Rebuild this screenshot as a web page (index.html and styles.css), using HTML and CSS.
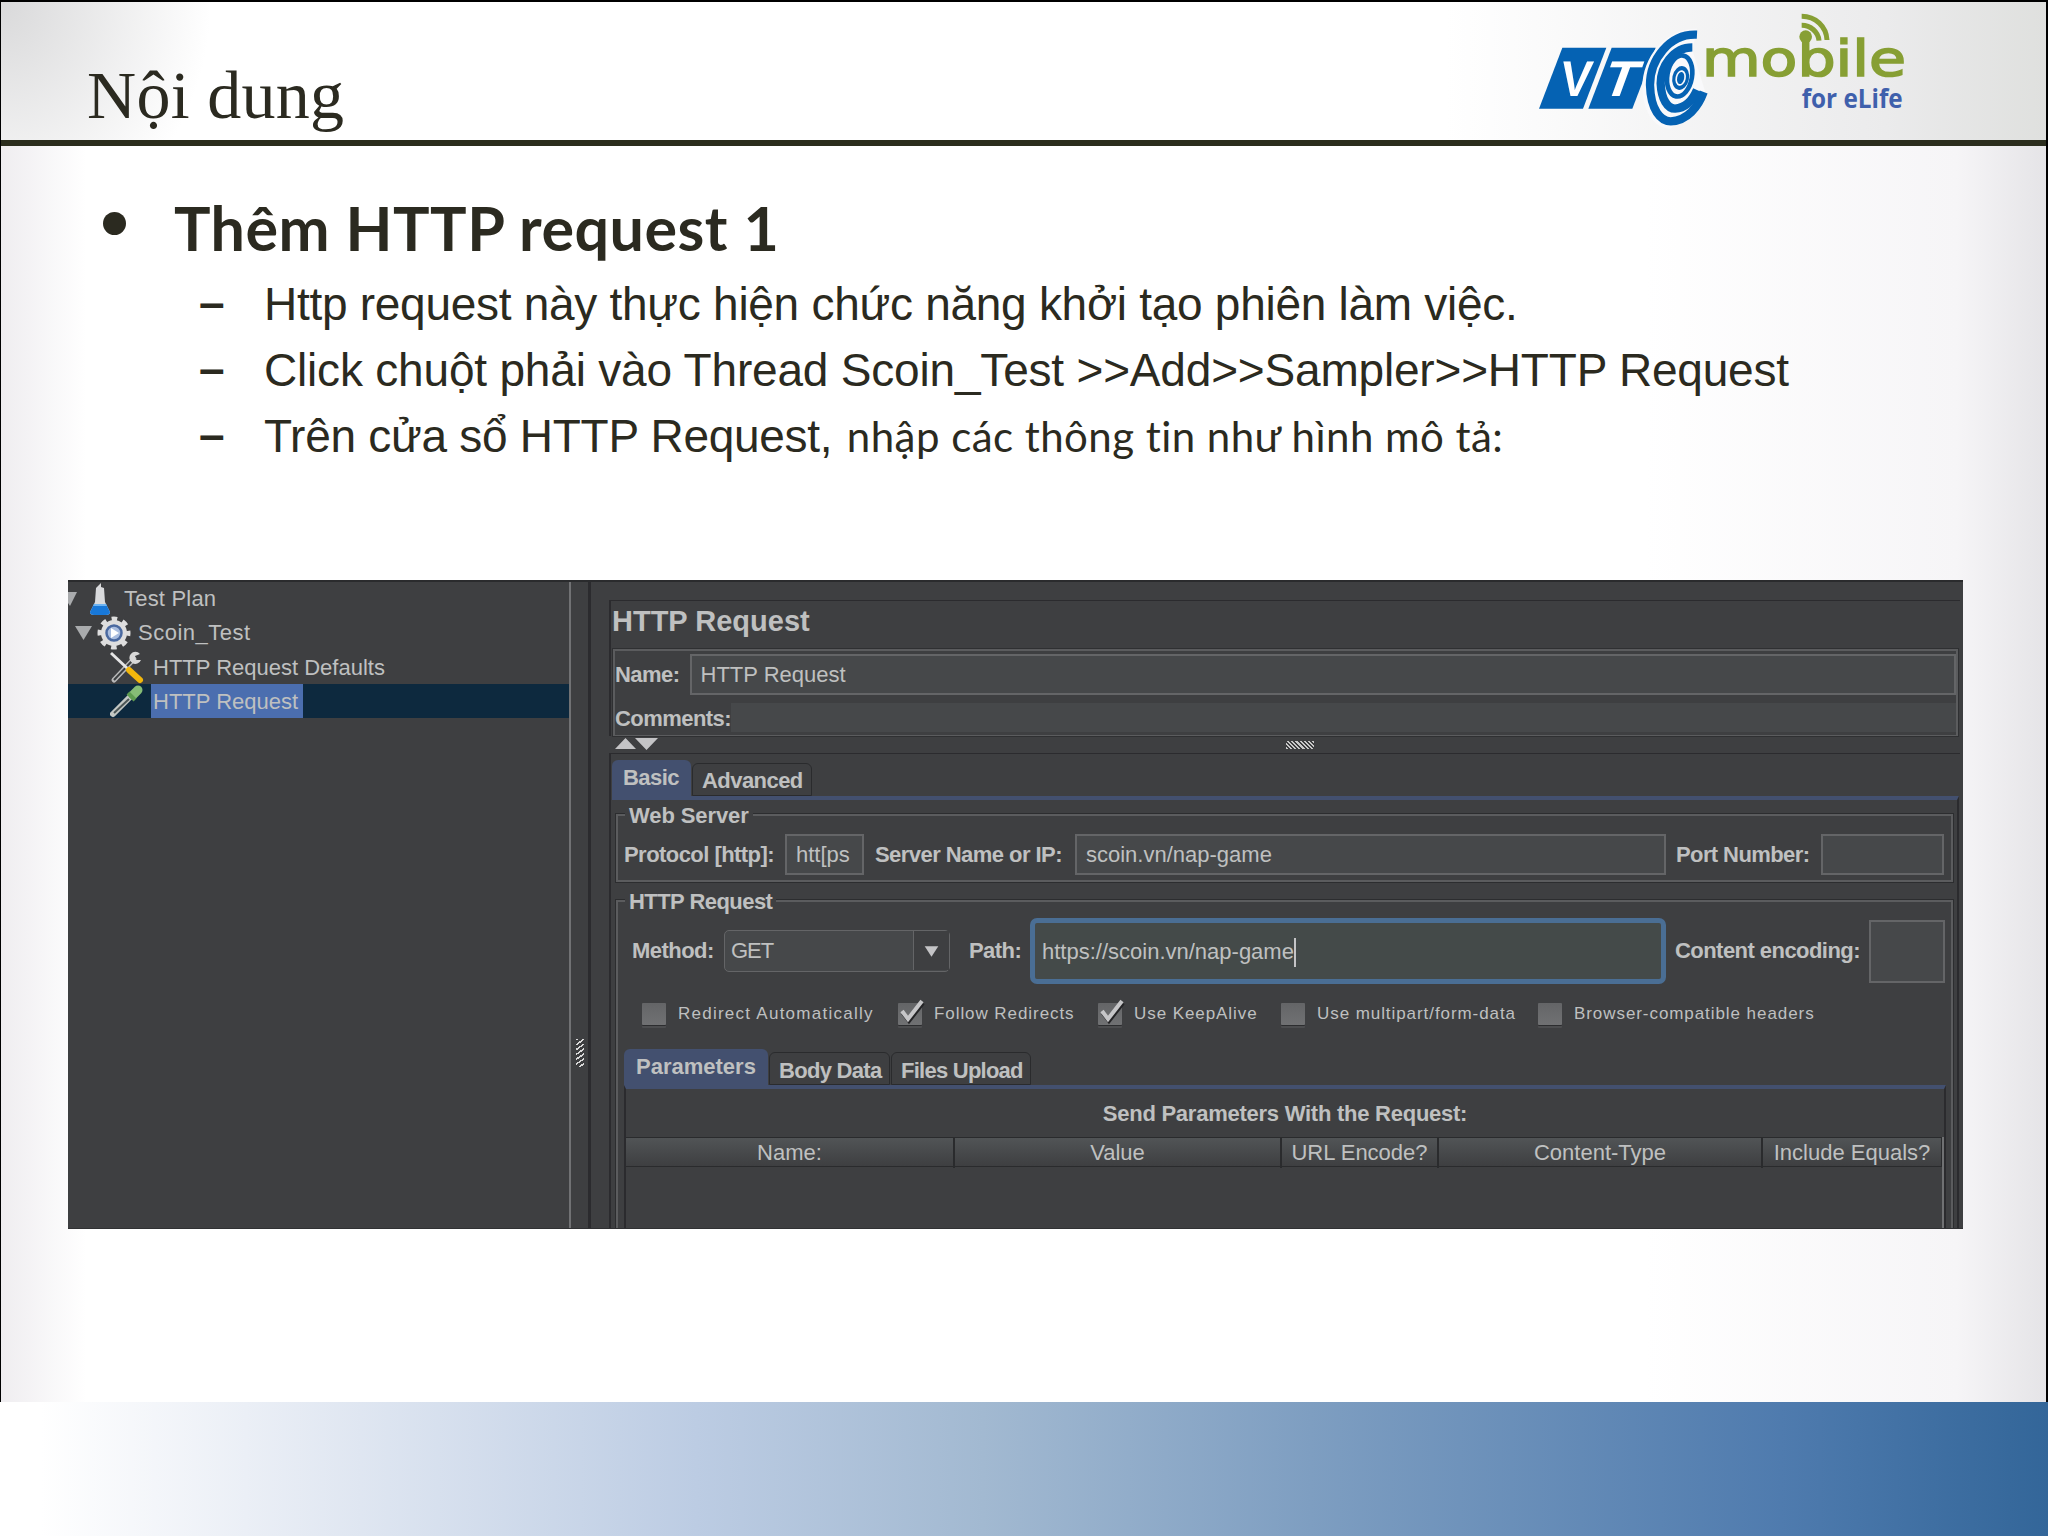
FILE: index.html
```html
<!DOCTYPE html>
<html lang="vi">
<head>
  <meta charset="UTF-8" />
  <title>Nội dung</title>
  <link rel="stylesheet" href="styles.css">
</head>
<body>
  <div class="slide">
    <header class="slide-header">
      <h1>Nội dung</h1>
      <svg class="logo" width="420" height="137" viewBox="0 0 1260 411">
        <path class="blue" d="M130 143H262L192 326H60Z" />
        <path class="blue" d="M278 143H410L340 326H208Z" />
        <text class="vtc" transform="translate(118 288) skewX(-8)" textLength="94" lengthAdjust="spacingAndGlyphs">V</text>
        <text class="vtc" transform="translate(240 288) skewX(-20)" textLength="100" lengthAdjust="spacingAndGlyphs">T</text>
        <path class="halo" d="M534 86C440 84 370 170 370 262C372 345 412 386 455 386L560 280L520 150Z" />
        <path class="ring outer" d="M534 104C450 100 393 180 393 255C395 330 425 364 455 364C505 362 538 320 554 276" />
        <path class="ring middle" d="M520 142C462 142 425 200 425 250C427 298 446 326 468 326C500 324 522 298 534 270" />
        <ellipse class="ring inner" cx="482" cy="228" rx="37" ry="62" transform="rotate(10 482 228)" />
        <ellipse class="blue" cx="485" cy="234" rx="25" ry="36" transform="rotate(12 485 234)" />
        <ellipse class="core" cx="485" cy="234" rx="13" ry="21" transform="rotate(12 485 234)" />
        <text class="mobile" x="549" y="229" textLength="612" lengthAdjust="spacingAndGlyphs">mobile</text>
        <circle class="green" cx="860" cy="110" r="19" />
        <path class="wave" d="M848 76C875 76 898 96 900 122M848 49C890 49 922 80 924 120" />
        <text class="elife" x="848" y="325" textLength="303" lengthAdjust="spacingAndGlyphs">for eLife</text>
      </svg>
    </header>

    <main class="content">
      <h2><span class="bullet"></span>Thêm HTTP request 1</h2>
      <ul class="points">
        <li>Http request này thực hiện chức năng khởi tạo phiên làm việc.</li>
        <li class="wide">Click chuột phải vào Thread Scoin_Test &gt;&gt;Add&gt;&gt;Sampler&gt;&gt;HTTP Request</li>
        <li>Trên cửa sổ HTTP Request, <span class="alt">nhập các thông tin như hình mô tả:</span></li>
      </ul>

      <div class="jmeter">
        <aside class="tree">
          <div class="node root">
            <svg class="arrow" width="9" height="16" viewBox="0 0 9 16"><path d="M0 1H9L2 15L0 12Z" /></svg>
            <svg class="flask" width="22" height="34" viewBox="0 0 22 34">
              <path d="M8 5L12 1V5L15 6L16 20L21 30Q21 33 17 33H5Q1 33 1 30L6 20L7 6Z" fill="#d9dadc" />
              <path d="M5 22H17L21 30Q21 33 17 33H5Q1 33 1 30Z" fill="#1878d8" />
              <path d="M5 22H17L18 24H4Z" fill="#6db4f2" />
            </svg>
            <span>Test Plan</span>
          </div>
          <div class="node group">
            <svg class="arrow" width="17" height="16" viewBox="0 0 17 16"><path d="M0 1H17L8.500 15Z" /></svg>
            <svg class="gear" width="34" height="34" viewBox="0 0 34 34">
              <circle cx="17" cy="17" r="13.500" fill="none" stroke="#dedede" stroke-width="6" stroke-dasharray="5.300 5.300" stroke-dashoffset="2.650" />
              <circle cx="17" cy="17" r="13" fill="#dedede" />
              <circle cx="17" cy="17" r="7.500" fill="#a9bddf" stroke="#4a69a0" stroke-width="2.500" />
              <path d="M14 12L22 17L14 22Z" fill="#fff" />
            </svg>
            <span>Scoin_Test</span>
          </div>
          <div class="node leaf">
            <svg width="34" height="34" viewBox="0 0 34 34">
              <path d="M4 30L24 9" stroke="#b9b9b9" stroke-width="5" stroke-linecap="round" />
              <path d="M4 30L22 11" stroke="#3c3f41" stroke-width="2" />
              <path d="M30 4A6 6 0 1 0 31 10L26 10L25 6Z" fill="#d8d8d8" />
              <path d="M1 3L18 19" stroke="#e6e6e6" stroke-width="3" />
              <path d="M19 20L30 30" stroke="#f3b70c" stroke-width="6" stroke-linecap="round" />
            </svg>
            <span>HTTP Request Defaults</span>
          </div>
          <div class="node leaf selected">
            <svg width="34" height="34" viewBox="0 0 34 34">
              <path d="M3 30L20 13" stroke="#c4c8c4" stroke-width="6" stroke-linecap="round" />
              <path d="M4 29L19 15" stroke="#4b5555" stroke-width="2" />
              <path d="M23 11L28 6" stroke="#86bd76" stroke-width="9" stroke-linecap="round" />
              <path d="M18 9L25 16" stroke="#5e9c50" stroke-width="4" />
            </svg>
            <span>HTTP Request</span>
          </div>
        </aside>
        <div class="splitter"><i class="grip vertical"></i></div>

        <section class="editor">
          <div class="top-box">
            <h3>HTTP Request</h3>
            <div class="naming">
              <div class="name-row">
                <label>Name:</label>
                <div class="field">HTTP Request</div>
              </div>
              <div class="comment-row">
                <label>Comments:</label>
                <div class="comment-field"></div>
              </div>
            </div>
          </div>
          <div class="divider">
            <svg width="43" height="12" viewBox="0 0 43 12"><path d="M0 11L10.500 0L21 11ZM20 0H43L31.500 12Z" fill="#c4c4c6" /></svg>
            <i class="grip"></i>
          </div>

          <div class="bottom-box">
            <div class="tabs main-tabs">
              <div class="tab active">Basic</div>
              <div class="tab">Advanced</div>
            </div>
            <div class="tab-page">
              <div class="fieldset server">
                <div class="legend web">Web Server</div>
                <div class="server-row">
                  <label>Protocol [http]:</label>
                  <div class="field">htt[ps</div>
                  <label class="l-server">Server Name or IP:</label>
                  <div class="field">scoin.vn/nap-game</div>
                  <label class="l-port">Port Number:</label>
                  <div class="field"></div>
                </div>
              </div>

              <div class="fieldset request">
                <div class="legend">HTTP Request</div>
                <div class="request-row">
                  <label>Method:</label>
                  <div class="combo"><span>GET</span><svg width="36" height="39" viewBox="0 0 36 39"><path d="M11 15H25L18 26Z" fill="#c4c4c6" /></svg></div>
                  <label class="l-path">Path:</label>
                  <div class="field focused">https://scoin.vn/nap-game<i class="caret"></i></div>
                  <label class="l-encoding">Content encoding:</label>
                  <div class="field tall"></div>
                </div>
                <div class="checks">
                  <div class="check auto"><i class="box"></i>Redirect Automatically</div>
                  <div class="check"><i class="box"><svg width="28" height="30" viewBox="0 0 28 30"><path class="shade" d="M5 14L11 22L25 4" /><path d="M4 12L10 20L24 2" /></svg></i>Follow Redirects</div>
                  <div class="check"><i class="box"><svg width="28" height="30" viewBox="0 0 28 30"><path class="shade" d="M5 14L11 22L25 4" /><path d="M4 12L10 20L24 2" /></svg></i>Use KeepAlive</div>
                  <div class="check"><i class="box"></i>Use multipart/form-data</div>
                  <div class="check"><i class="box"></i>Browser-compatible headers</div>
                </div>
                <div class="tabs param-tabs">
                  <div class="tab active">Parameters</div>
                  <div class="tab">Body Data</div>
                  <div class="tab">Files Upload</div>
                </div>
                <div class="params">
                  <div class="params-title">Send Parameters With the Request:</div>
                  <div class="table-area">
                    <div class="table-head">
                      <div>Name:</div>
                      <div>Value</div>
                      <div>URL Encode?</div>
                      <div>Content-Type</div>
                      <div>Include Equals?</div>
                    </div>
                  </div>
                </div>
              </div>
            </div>
          </div>
        </section>
      </div>
    </main>
  </div>
  <footer class="footer"></footer>
</body>
</html>
```
FILE: styles.css
```css
* {
  box-sizing: border-box;
}

body {
  margin: 0;
  width: 2048px;
  height: 1536px;
  overflow: hidden;
  background: #fff;
  font-family: "Liberation Sans", Arial, sans-serif;
}

h1, h2, h3, ul {
  margin: 0;
  padding: 0;
  font-weight: normal;
}

/* slide */
.slide {
  height: 1402px;
  border: 1px solid #000;
  border-width: 2px 2px 0 1px;
  color: #2b2a20;
  background:
    linear-gradient(to right, #efedf0, rgba(255, 255, 255, 0) 85px),
    linear-gradient(to left, #e5e4e7, #f6f5f7 90px, rgba(255, 255, 255, 0) 400px),
    #fff;
}

.slide-header {
  display: flex;
  justify-content: space-between;
  height: 144px;
  padding: 0 107px 0 86px;
  border-bottom: 6px solid #2b2d1d;
  background:
    radial-gradient(ellipse 210px 240px at 0 0, #d9d9da, rgba(255, 255, 255, 0)),
    linear-gradient(to left, #dfe0de, #ebebec 160px, rgba(255, 255, 255, 0) 600px),
    #fff;
}

.slide-header h1 {
  padding-top: 55px;
  font-family: "Liberation Serif", "Times New Roman", serif;
  font-size: 68px;
  line-height: 76px;
  letter-spacing: 0.3px;
}

.logo {
  margin-top: -2px;
}

.logo .blue { fill: #0562b3; }
.logo .green { fill: #879f34; }
.logo .halo { fill: #f9f9fb; }
.logo .ring { fill: none; stroke: #0562b3; }
.logo .outer { stroke-width: 25; }
.logo .middle { stroke-width: 25; }
.logo .inner { stroke-width: 14; }
.logo .core { fill: none; stroke: #f9f9fb; stroke-width: 5; }
.logo .vtc { fill: #fff; font: bold 150px "Liberation Sans", sans-serif; }
.logo .mobile { fill: #879f34; stroke: #879f34; stroke-width: 5; font: 148px "DejaVu Sans", sans-serif; }
.logo .wave { fill: none; stroke: #879f34; stroke-width: 15; }
.logo .elife { fill: #3f60ac; font: bold 80px "Open Sans", sans-serif; }

.content h2 {
  display: flex;
  align-items: center;
  height: 80px;
  margin-top: 41px;
  padding-left: 102px;
  font-family: Lato, "Open Sans", sans-serif;
  font-size: 61px;
  font-weight: bold;
  letter-spacing: 0.5px;
}

.bullet {
  width: 23px;
  height: 23px;
  margin: 0 48px 7px 0;
  border-radius: 50%;
  background: #2b2a20;
}

.points {
  padding: 4px 0 0 198px;
  list-style: none;
  font-size: 46px;
  letter-spacing: -0.28px;
}

.points li {
  display: flex;
  height: 66px;
  line-height: 66px;
  white-space: pre;
}

.points .wide {
  letter-spacing: -0.19px;
}

.points li::before {
  content: "–";
  width: 65px;
  margin-top: -2px;
  font-weight: bold;
}

.points .alt {
  margin-left: 2px;
  font-family: Lato, "Open Sans", sans-serif;
  font-size: 42px;
  letter-spacing: 0.45px;
}

/* application window */
.jmeter {
  display: flex;
  width: 1895px;
  height: 649px;
  margin: 111px 0 0 67px;
  overflow: hidden;
  border-top: 2px solid #2a2b2d;
  border-bottom: 1px solid #303133;
  background: #3e3f41;
  color: #bfc0c0;
  font-size: 22px;
  white-space: nowrap;
}

.tree {
  width: 501px;
}

.node {
  display: flex;
  align-items: center;
  height: 34px;
}

.arrow { fill: #a9abad; }
.root .flask { margin: 0 13px 0 12px; }
.root { letter-spacing: 0.2px; }
.group { padding-left: 7px; letter-spacing: 0.5px; }
.group .gear { margin: 0 7px 0 5px; }
.leaf { padding-left: 42px; }
.leaf span { margin-left: 7px; padding: 1px 5px 0 2px; line-height: 33px; }
.selected { background: #0d293e; }
.selected span { background: #4b6eaf; }

.splitter {
  display: flex;
  align-items: center;
  justify-content: center;
  width: 22px;
  border-left: 2px solid #717274;
  border-right: 3px solid #2b2b2e;
}

.grip {
  width: 28px;
  height: 8px;
  background: repeating-linear-gradient(45deg, #c8c8c8 0 1.500px, #3c3d3f 1.500px 3px);
}

.grip.vertical {
  width: 8px;
  height: 28px;
  margin-top: 296px;
  flex: none;
  background: repeating-linear-gradient(145deg, #d8d8d8 0 1.500px, #3c3d3f 1.500px 4px);
}

/* right-hand editor */
.editor {
  flex: 1;
  padding: 18px 3px 0 18px;
}

.top-box {
  height: 136px;
  border-top: 1px solid #2b2b2e;
  border-left: 2px solid #2b2b2e;
  padding: 0 2px 0 1px;
}

.top-box h3 {
  height: 48px;
  font-size: 29px;
  font-weight: bold;
  line-height: 41px;
}

.naming {
  height: 87px;
  margin-left: 1px;
  border: 2px solid #5b5c5e;
  border-bottom-width: 1px;
  outline: 1px solid #2f3032;
  padding-top: 3px;
}

label, .tab, .legend {
  font-weight: bold;
  letter-spacing: -0.55px;
}

.name-row, .comment-row {
  display: flex;
  align-items: center;
}

.name-row .field {
  flex: 1;
  margin-left: 10px;
  padding-left: 9px;
}

.comment-row {
  height: 29px;
  margin-top: 8px;
}

.comment-row label {
  padding-top: 3px;
}

.comment-field {
  flex: 1;
  height: 29px;
  background: #46484a;
}

.field {
  display: flex;
  align-items: center;
  height: 41px;
  padding-left: 9px;
  border: 2px solid #646567;
  background: #46484a;
}

.divider {
  display: flex;
  align-items: center;
  height: 17px;
  padding: 0 0 2px 6px;
}

.divider .grip {
  margin: 2px 0 0 628px;
}

.bottom-box {
  height: 480px;
  border-top: 1px solid #2b2b2e;
  border-left: 2px solid #2b2b2e;
  padding: 6px 0 0 1px;
}

.tabs {
  display: flex;
  align-items: flex-end;
  gap: 1px;
}

.tab {
  height: 33px;
  border: 1px solid #2a2b2d;
  border-radius: 6px 6px 0 0;
  padding-left: 9px;
  line-height: 34px;
}

.tab.active {
  height: 36px;
  border: none;
  background: #43506f;
  line-height: 35px;
}

.main-tabs .tab { width: 120px; }
.main-tabs .tab.active { width: 79px; padding-left: 11px; }

.tab-page {
  height: 440px;
  margin-right: 1px;
  padding: 14px 4px 0 4px;
  border-top: 4px solid #43506f;
  border-right: 2px solid #2b2b2e;
}

/* etched group boxes */
.fieldset {
  border: 2px solid #5b5c5e;
  box-shadow: 0 0 0 1px #2c2d2f;
}

.legend {
  position: relative;
  width: max-content;
  height: 24px;
  margin: -13px 0 0 7px;
  padding: 0 4px;
  background: #3e3f41;
  line-height: 25px;
}

.legend.web {
  letter-spacing: -0.1px;
}

.server {
  height: 68px;
}

.server-row {
  display: grid;
  grid-template-columns: 161px 79px 11px 200px 591px 10px 145px 123px;
  align-items: center;
  height: 41px;
  margin-top: 7px;
  padding-left: 6px;
}

.server-row .l-server { grid-column: 4; }
.server-row .l-port { grid-column: 7; letter-spacing: -0.6px; }

.request {
  height: 400px;
  margin-top: 18px;
}

.request-row {
  display: grid;
  grid-template-columns: 92px 226px 19px 61px 636px 8px 195px 76px;
  align-items: center;
  height: 66px;
  margin-top: 5px;
  padding-left: 14px;
}

.request-row .l-path { grid-column: 3 / 5; padding-left: 19px; }
.request-row .l-encoding { grid-column: 6 / 8; padding-left: 9px; }

.combo {
  display: flex;
  justify-content: space-between;
  height: 42px;
  padding-left: 6px;
  border: 1px solid #646567;
  border-radius: 5px;
  background: #46484a;
  line-height: 39px;
  letter-spacing: -1px;
}

.combo svg {
  border-left: 1px solid #646567;
  background: #3e3f41;
}

.focused {
  height: 66px;
  padding: 2px 0 0 7px;
  border: 5px solid #4a6e94;
  border-radius: 7px;
  background: #444a49;
}

.caret {
  width: 2px;
  height: 29px;
  background: #c4c4c6;
}

.tall {
  height: 63px;
}

.checks {
  display: grid;
  grid-template-columns: 256px 200px 183px 257px 300px;
  align-items: center;
  height: 24px;
  margin-top: 18px;
  padding-left: 24px;
  font-size: 17px;
  letter-spacing: 0.93px;
}

.checks .auto {
  letter-spacing: 1.25px;
}

.check {
  display: flex;
  align-items: center;
}

.box {
  position: relative;
  width: 24px;
  height: 22px;
  margin-right: 12px;
  background: linear-gradient(#646567, #707173);
  border-radius: 1px;
  box-shadow: 0 1px #2c2d2f, 0 3px #4c4d4f;
}

.box svg {
  position: absolute;
  left: 0;
  top: -4px;
  fill: none;
  stroke: #c6c6c8;
  stroke-width: 4;
}

.box .shade {
  stroke: #242426;
}

.param-tabs {
  margin: 23px 0 0 6px;
}

.param-tabs .tab { width: 121px; line-height: 35px; }
.param-tabs .tab.active { width: 144px; padding-left: 12px; letter-spacing: 0; line-height: 36px; }
.param-tabs .tab:nth-child(2) { letter-spacing: -0.7px; }
.param-tabs .tab:last-child { width: 140px; letter-spacing: -0.75px; }

.params {
  height: 160px;
  margin: 0 5px 0 6px;
  border-top: 4px solid #43506f;
  border-left: 2px solid #2b2b2e;
  border-right: 2px solid #2b2b2e;
}

.params-title {
  height: 48px;
  font-weight: bold;
  line-height: 49px;
  letter-spacing: -0.25px;
  text-align: center;
}

.table-area {
  height: 120px;
  border-right: 2px solid #707173;
}

.table-head {
  display: grid;
  grid-template-columns: 327px 327px 157px 324px 1fr;
  height: 30px;
  border: 1px solid #2a2b2d;
  border-left: none;
  background: linear-gradient(#515456, #3e3f41);
  text-align: center;
  line-height: 30px;
}

.table-head div + div {
  border-left: 2px solid #2a2b2d;
}

.footer {
  height: 134px;
  background: linear-gradient(to right, #fff 2%, #ebeff6 12%, #bccce3 34%, #a2b9d1 48%, #7e9ec1 64%, #4f7bae 87%, #336699);
}
```
